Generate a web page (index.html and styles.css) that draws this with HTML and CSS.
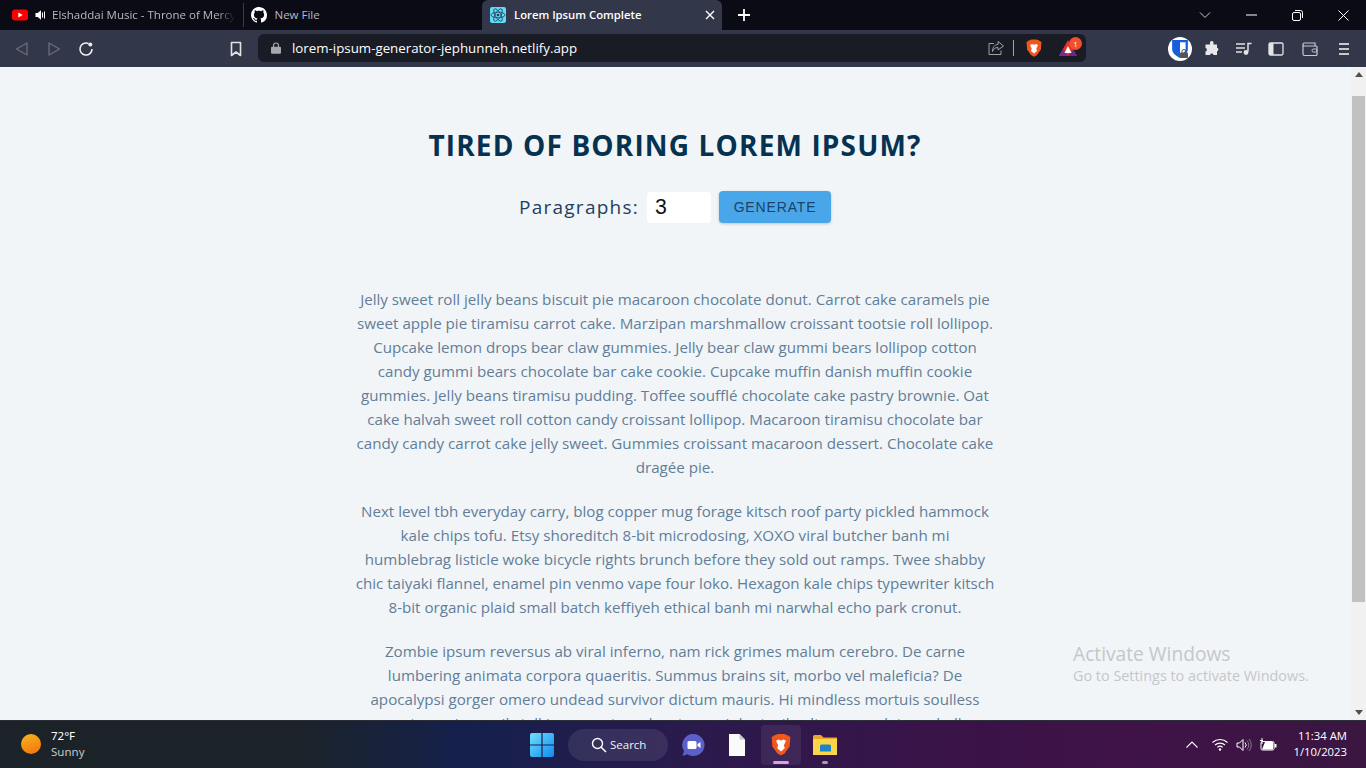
FILE: index.html

```html
<!DOCTYPE html>
<html lang="en">
<head>
    <meta charset="UTF-8">
    <meta name="viewport" content="width=device-width, initial-scale=1.0">
    <title>Lorem Ipsum Complete</title>
    <link rel="stylesheet" href="styles.css">
</head>
<body>
    <div class="screen">
        <div class="tabstrip">
            <div class="tab tab-yt">
                <svg class="fav-yt" viewBox="0 0 16 12"><rect width="16" height="11" y="0.5" rx="3" fill="#f00"/><path d="M6.3 3.5v5l4.4-2.5z" fill="#fff"/></svg>
                <svg class="audio" viewBox="0 0 12 12"><path d="M0.5 4h2.2L6 1.2v9.6L2.7 8H0.5z" fill="#fff"/><path d="M7.5 3.5v5M9.5 2.5v7" stroke="#fff" stroke-width="1"/></svg>
                <span class="tab-title fade">Elshaddai Music - Throne of Mercy</span>
            </div>
            <div class="tab tab-gh">
                <svg class="fav" viewBox="0 0 16 16"><path fill="#fff" d="M8 0C3.58 0 0 3.58 0 8c0 3.54 2.29 6.53 5.47 7.59.4.07.55-.17.55-.38 0-.19-.01-.82-.01-1.49-2.01.37-2.53-.49-2.69-.94-.09-.23-.48-.94-.82-1.13-.28-.15-.68-.52-.01-.53.63-.01 1.08.58 1.23.82.72 1.21 1.87.87 2.33.66.07-.52.28-.87.51-1.07-1.78-.2-3.64-.89-3.64-3.95 0-.87.31-1.59.82-2.15-.08-.2-.36-1.02.08-2.12 0 0 .67-.21 2.2.82.64-.18 1.32-.27 2-.27s1.36.09 2 .27c1.53-1.04 2.2-.82 2.2-.82.44 1.1.16 1.92.08 2.12.51.56.82 1.27.82 2.15 0 3.07-1.87 3.75-3.65 3.95.29.25.54.73.54 1.48 0 1.07-.01 1.93-.01 2.2 0 .21.15.46.55.38A8.01 8.01 0 0 0 16 8c0-4.42-3.58-8-8-8z"/></svg>
                <span class="tab-title">New File</span>
            </div>
            <div class="tab tab-active">
                <svg class="fav" viewBox="0 0 16 16"><rect width="16" height="16" rx="2" fill="#61dafb"/><g fill="none" stroke="#24404f" stroke-width="0.8"><ellipse cx="8" cy="8" rx="7" ry="2.8"/><ellipse cx="8" cy="8" rx="7" ry="2.8" transform="rotate(60 8 8)"/><ellipse cx="8" cy="8" rx="7" ry="2.8" transform="rotate(120 8 8)"/></g><circle cx="8" cy="8" r="1.3" fill="#24404f"/></svg>
                <span class="tab-title active-title">Lorem Ipsum Complete</span>
                <svg class="tab-close" viewBox="0 0 10 10"><path d="M1 1l8 8M9 1l-8 8" stroke="#fff" stroke-width="1.4"/></svg>
            </div>
            <svg class="new-tab" viewBox="0 0 12 12"><path d="M6 0v12M0 6h12" stroke="#fff" stroke-width="1.8"/></svg>
            <div class="win-controls">
                <div class="win-btn"><svg width="12" height="8" viewBox="0 0 12 8"><path d="M1 1.5l5 5 5-5" fill="none" stroke="#c8c8cc"/></svg></div>
                <div class="win-btn"><svg width="11" height="2" viewBox="0 0 11 2"><path d="M0 1h11" stroke="#fff"/></svg></div>
                <div class="win-btn"><svg width="11" height="11" viewBox="0 0 11 11"><rect x="0.5" y="2.5" width="8" height="8" rx="1.5" fill="none" stroke="#fff"/><path d="M3 .5h5.5a2 2 0 0 1 2 2V8" fill="none" stroke="#fff"/></svg></div>
                <div class="win-btn"><svg width="11" height="11" viewBox="0 0 11 11"><path d="M.5.5l10 10M10.5.5l-10 10" stroke="#fff"/></svg></div>
            </div>
        </div>

        <div class="toolbar">
            <div class="nav-group">
                <svg class="tool" viewBox="0 0 16 16"><path d="M13 2v12L2.500 8z" fill="none" stroke="#6a6e78" stroke-width="1.3" stroke-linejoin="round"/></svg>
                <svg class="tool" viewBox="0 0 16 16"><path d="M3 2v12L13.500 8z" fill="none" stroke="#6a6e78" stroke-width="1.3" stroke-linejoin="round"/></svg>
                <svg class="tool" viewBox="0 0 16 16"><path d="M14 8A6 6 0 1 1 10.500 2.600" fill="none" stroke="#eee" stroke-width="1.600"/><circle cx="12.300" cy="3.600" r="2" fill="#eee"/></svg>
            </div>
            <svg class="tool bookmark" viewBox="0 0 16 16"><path d="M3.500 1.500h9v13L8 11l-4.500 3.500z" fill="none" stroke="#e4e4e4" stroke-width="1.600" stroke-linejoin="round"/></svg>
            <div class="address">
                <svg class="lock" viewBox="0 0 10 12"><path d="M2.500 5V3.500a2.500 2.500 0 0 1 5 0V5" fill="none" stroke="#a6a8ae" stroke-width="1.200"/><rect y="4.800" width="10" height="7" rx="1" fill="#a6a8ae"/></svg>
                <span class="url">lorem-ipsum-generator-jephunneh.netlify.app</span>
                <svg class="share" viewBox="0 0 16 16"><path d="M6 3.500H1v11h12v-4" fill="none" stroke="#a0a2a8"/><path d="M10 1.500L15.500 6 10 10V7.500C7 7.500 5.500 9 4.500 11.500 4.500 7.500 6.500 4.500 10 4.500z" fill="none" stroke="#a0a2a8"/></svg>
                <span class="addr-sep"></span>
                <svg class="brave" viewBox="0 0 16 18"><path d="M3 1.500L5.500 .5h5L13 1.500l2.500 1.500-.6 7.500L11 16l-3 1.700L5 16 1.100 10.500.5 3z" fill="#f1561d"/><path d="M4 6l2-1 2 .7L10 5l2 1-1.700 3.500L11 12l-3 2.500L5 12l.7-2.500z" fill="#fff"/></svg>
                <div class="bat">
                    <svg class="bat-tri" viewBox="0 0 18 16"><path d="M9 0l9 16H0z" fill="#e8302c"/><path d="M0 16l4-7 5 7z" fill="#7d2b8f"/><path d="M18 16l-3.600-6.500L9 16z" fill="#5e2a8c"/><path d="M9 6l3.500 7h-7z" fill="#fff"/></svg>
                    <span class="bat-badge">1</span>
                </div>
            </div>
            <div class="ext-group">
                <div class="bitwarden">
                    <svg width="16" height="18" viewBox="0 0 14 16"><path d="M0 0h14v8c0 4-4 6.500-7 8-3-1.500-7-4-7-8z" fill="#175ddc"/><path d="M7 2h5v6c0 2.500-3 4.300-5 5.500z" fill="#fff"/></svg>
                    <svg class="bw-lock" width="8" height="9" viewBox="0 0 8 9"><path d="M2 4V2.500a2 2 0 0 1 4 0V4" fill="none" stroke="#555"/><rect y="3.500" width="8" height="5.500" rx="1" fill="#555"/></svg>
                </div>
                <svg class="tool" viewBox="0 0 16 16"><path d="M6 1.500a1.800 1.800 0 0 1 3.500 0V3.500h3.500v3.300a1.800 1.800 0 0 1 0 3.500V14H9.500a1.800 1.800 0 0 0-3.500 0H1.500v-3.500a1.800 1.800 0 0 0 0-3.500V3.500H6z" fill="#e8e8e8"/></svg>
                <svg class="tool" viewBox="0 0 16 16"><path d="M0 3h9M0 7h9M0 11h6" stroke="#e4e4e4" stroke-width="1.300"/><path d="M12 10.500V2.500h3.500" fill="none" stroke="#e4e4e4" stroke-width="1.500"/><circle cx="10" cy="11.500" r="2.400" fill="#e4e4e4"/></svg>
                <svg class="tool" viewBox="0 0 16 16"><rect x="1" y="2" width="14" height="12" rx="1.500" fill="none" stroke="#e4e4e4" stroke-width="1.300"/><rect x="1" y="2" width="4.500" height="12" fill="#e4e4e4"/></svg>
                <svg class="tool tool-wide" viewBox="0 0 16 16"><path d="M1 3.500V13a1.500 1.500 0 0 0 1.500 1.500h11.500a1 1 0 0 0 1-1V6a1 1 0 0 0-1-1H2.500A1.500 1.500 0 0 1 1 3.500 1.500 1.500 0 0 1 2.500 2H13v3" fill="none" stroke="#c8c9cd" stroke-width="1.200"/><rect x="10" y="8" width="5" height="3" rx="1.500" fill="none" stroke="#c8c9cd"/></svg>
                <svg class="tool tool-wide" viewBox="0 0 16 16"><path d="M3 3h10M3 8h10M3 13h10" stroke="#c8c9cd" stroke-width="1.800"/></svg>
            </div>
        </div>

        <div class="viewport">
            <main class="page">
                <section class="section-center">
                    <h1 class="page-title">Tired of boring lorem ipsum?</h1>
                    <form class="lorem-form">
                        <label class="amount-label" for="amount">Paragraphs:</label>
                        <input class="amount-input" type="number" id="amount" value="3">
                        <button class="btn" type="button">Generate</button>
                    </form>
                    <article class="lorem-text">
                        <p>Jelly sweet roll jelly beans biscuit pie macaroon chocolate donut. Carrot cake caramels pie<br>sweet apple pie tiramisu carrot cake. Marzipan marshmallow croissant tootsie roll lollipop.<br>Cupcake lemon drops bear claw gummies. Jelly bear claw gummi bears lollipop cotton<br>candy gummi bears chocolate bar cake cookie. Cupcake muffin danish muffin cookie<br>gummies. Jelly beans tiramisu pudding. Toffee soufflé chocolate cake pastry brownie. Oat<br>cake halvah sweet roll cotton candy croissant lollipop. Macaroon tiramisu chocolate bar<br>candy candy carrot cake jelly sweet. Gummies croissant macaroon dessert. Chocolate cake<br>dragée pie.</p>
                        <p>Next level tbh everyday carry, blog copper mug forage kitsch roof party pickled hammock<br>kale chips tofu. Etsy shoreditch 8-bit microdosing, XOXO viral butcher banh mi<br>humblebrag listicle woke bicycle rights brunch before they sold out ramps. Twee shabby<br>chic taiyaki flannel, enamel pin venmo vape four loko. Hexagon kale chips typewriter kitsch<br>8-bit organic plaid small batch keffiyeh ethical banh mi narwhal echo park cronut.</p>
                        <p>Zombie ipsum reversus ab viral inferno, nam rick grimes malum cerebro. De carne<br>lumbering animata corpora quaeritis. Summus brains sit, morbo vel maleficia? De<br>apocalypsi gorger omero undead survivor dictum mauris. Hi mindless mortuis soulless<br>creaturas, imo evil stalking monstra adventus resi dentevil vultus comedat cerebella</p>
                    </article>
                </section>
            </main>
            <div class="scrollbar">
                <svg class="arrow" viewBox="0 0 8 5"><path d="M4 0l4 5H0z" fill="#505050"/></svg>
                <div class="scroll-track"><div class="scroll-thumb"></div></div>
                <svg class="arrow" viewBox="0 0 8 5"><path d="M0 0h8L4 5z" fill="#505050"/></svg>
            </div>
            <div class="activate">
                <div class="activate-title">Activate Windows</div>
                <div class="activate-sub">Go to Settings to activate Windows.</div>
            </div>
        </div>

        <footer class="taskbar">
            <div class="weather">
                <span class="sun"></span>
                <div>
                    <div class="temp">72°F</div>
                    <div class="sky">Sunny</div>
                </div>
            </div>
            <div class="task-center">
                <svg class="start" viewBox="0 0 24 24"><defs><linearGradient id="win" x1="0" y1="0" x2="1" y2="1"><stop offset="0" stop-color="#6fe0fb"/><stop offset="1" stop-color="#0f8bf0"/></linearGradient></defs><path d="M0 2a2 2 0 0 1 2-2h9.400v11.400H0zM12.600 0H22a2 2 0 0 1 2 2v9.400H12.600zM0 12.600h11.400V24H2a2 2 0 0 1-2-2zM12.600 12.600H24V22a2 2 0 0 1-2 2h-9.400z" fill="url(#win)"/></svg>
                <div class="search">
                    <svg width="16" height="16" viewBox="0 0 16 16"><circle cx="6.500" cy="6.500" r="5" fill="none" stroke="#fff" stroke-width="1.400"/><path d="M10.200 10.200L15 15" stroke="#fff" stroke-width="1.500"/></svg>
                    <span>Search</span>
                </div>
                <div class="task-app">
                    <svg width="24" height="24" viewBox="0 0 24 24"><path d="M12.500 1a11 11 0 1 1-6 20.200L1.500 23 3 18A11 11 0 0 1 12.500 1z" fill="#5b5fc7"/><rect x="6.500" y="8" width="9" height="8" rx="1.500" fill="#fff"/><path d="M16.500 11l3-2v6l-3-2z" fill="#fff"/></svg>
                </div>
                <div class="task-app">
                    <svg width="18" height="22" viewBox="0 0 18 22"><path d="M1 0h10.500L17 5.500V22H1z" fill="#fafafa"/><path d="M11.500 0L17 5.500h-5.500z" fill="#c9c9c9"/></svg>
                </div>
                <div class="task-app task-running">
                    <svg width="20" height="23" viewBox="0 0 16 18"><path d="M3 1.500L5.500 .5h5L13 1.500l2.500 1.500-.6 7.500L11 16l-3 1.700L5 16 1.100 10.500.5 3z" fill="#f1561d"/><path d="M4 6l2-1 2 .7L10 5l2 1-1.700 3.500L11 12l-3 2.500L5 12l.7-2.500z" fill="#fff"/></svg>
                    <span class="pill pill-active"></span>
                </div>
                <div class="task-app">
                    <svg width="24" height="20" viewBox="0 0 24 20"><path d="M0 1.500A1.500 1.500 0 0 1 1.500 0h6.500l2.500 2.500H24V19a1 1 0 0 1-1 1H0z" fill="#e9a825"/><rect y="4" width="24" height="16" fill="#fbd64a"/><path d="M7 11a1.500 1.500 0 0 1 1.500-1.500h8A1.500 1.500 0 0 1 18 11v5.500H7z" fill="#1d86c8"/></svg>
                    <span class="pill"></span>
                </div>
            </div>
            <div class="tray">
                <svg class="tray-chevron" width="12" height="7" viewBox="0 0 12 7"><path d="M.5 6.500L6 1l5.500 5.500" fill="none" stroke="#fff" stroke-width="1.100"/></svg>
                <svg width="16" height="13" viewBox="0 0 16 13"><path d="M.5 4.500a11 11 0 0 1 15 0M3 7a7.500 7.500 0 0 1 10 0M5.300 9.300a4 4 0 0 1 5.400 0" fill="none" stroke="#fff" stroke-width="1.100"/><circle cx="8" cy="11.500" r="1.200" fill="#fff"/></svg>
                <svg width="16" height="14" viewBox="0 0 16 14"><path d="M1 5h2.500L7 1.500v11L3.500 9H1z" fill="none" stroke="#fff"/><path d="M9 4.500a3.500 3.500 0 0 1 0 5" fill="none" stroke="#fff"/><path d="M11 2.500a6.500 6.500 0 0 1 0 9M13 1a9 9 0 0 1 0 12" fill="none" stroke="#8a7590"/></svg>
                <svg width="17" height="13" viewBox="0 0 17 13"><rect x="1" y="3.500" width="13" height="8.500" rx="1.500" fill="none" stroke="#fff"/><path d="M14.500 6h2v3.500h-2z" fill="#fff"/><path d="M2 11.500L5 4h8v7.500z" fill="#fff"/><path d="M2 0v6M0 2.500h3" stroke="#fff"/></svg>
                <div class="clock">
                    <div>11:34 AM</div>
                    <div>1/10/2023</div>
                </div>
            </div>
        </footer>
    </div>
</body>
</html>
```

FILE: styles.css

```css
* {
    box-sizing: border-box;
}

body {
    margin: 0;
    font-family: "Open Sans", "Noto Sans", Arial, sans-serif;
}

.screen {
    display: flex;
    flex-direction: column;
    height: 100vh;
    overflow: hidden;
}

/* tab strip */
.tabstrip {
    display: flex;
    align-items: center;
    height: 30px;
    flex: none;
    background-color: #0b0b16;
}

.tab {
    display: flex;
    align-items: center;
    height: 30px;
    flex: none;
}

.tab-yt {
    width: 243.5px;
    padding-left: 12px;
    border-right: 1px solid #3a3b46;
    height: 24px;
}

.fav-yt {
    width: 16px;
    height: 12px;
    margin-right: 7px;
}

.audio {
    width: 12px;
    height: 12px;
    margin-right: 5px;
}

.tab-title {
    margin-top: -2px;
    font-size: 11.5px;
    color: #b8bac2;
    white-space: nowrap;
}

.fade {
    width: 183px;
    overflow: hidden;
    -webkit-mask-image: linear-gradient(to right, #000 90%, transparent);
    mask-image: linear-gradient(to right, #000 90%, transparent);
}

.tab-gh {
    width: 238.5px;
    padding-left: 7px;
}

.fav {
    width: 16px;
    height: 16px;
    margin-right: 8px;
}

.tab-active {
    width: 240px;
    padding: 0 7px 0 8px;
    background-color: #32374a;
    border-radius: 6px 6px 0 0;
}

.active-title {
    flex: 1;
    font-size: 11.3px;
    color: #fff;
    font-weight: 600;
}

.tab-close {
    width: 10px;
    height: 10px;
}

.new-tab {
    width: 12px;
    height: 12px;
    margin-left: 16px;
}

.win-controls {
    display: flex;
    margin-left: auto;
}

.win-btn {
    display: flex;
    align-items: center;
    justify-content: center;
    width: 46px;
    height: 30px;
}

/* toolbar */
.toolbar {
    display: flex;
    align-items: center;
    height: 37px;
    flex: none;
    background-color: #32374a;
}

.nav-group {
    display: flex;
    gap: 16px;
    padding-left: 14px;
}

.tool {
    width: 16px;
    height: 16px;
    flex: none;
}

.tool-wide {
    margin-left: 2px;
}

.bookmark {
    margin-left: 134px;
}

.address {
    display: flex;
    align-items: center;
    align-self: flex-start;
    width: 828px;
    height: 28px;
    margin-top: 4px;
    margin-left: 14px;
    padding: 0 0 0 13px;
    background-color: #191b25;
    border-radius: 6px;
}

.lock {
    width: 10px;
    height: 12px;
    margin-right: 11px;
}

.url {
    flex: 1;
    margin-top: -1px;
    font-size: 13.3px;
    color: #fff;
}

.share {
    width: 16px;
    height: 16px;
}

.addr-sep {
    width: 1px;
    height: 16px;
    margin: 0 12px 0 9px;
    background-color: #a0a2a8;
}

.brave {
    width: 16px;
    height: 18px;
    margin-right: 17px;
}

.bat {
    position: relative;
    width: 18px;
    height: 16px;
    margin-right: 9px;
}

.bat-tri {
    display: block;
    width: 18px;
    height: 16px;
}

.bat-badge {
    position: absolute;
    top: -3px;
    right: -5px;
    width: 13px;
    height: 13px;
    border-radius: 50%;
    background-color: #f0502c;
    color: #fff;
    font-size: 8px;
    line-height: 13px;
    text-align: center;
}

.ext-group {
    display: flex;
    align-items: center;
    gap: 16px;
    margin-left: 82px;
}

.bitwarden {
    position: relative;
    display: flex;
    align-items: center;
    justify-content: center;
    width: 24px;
    height: 24px;
    margin-right: -4px;
    border-radius: 50%;
    background-color: #fff;
}

.bw-lock {
    position: absolute;
    right: 4px;
    bottom: 3px;
}

/* page */
.viewport {
    position: relative;
    display: flex;
    flex: 1;
    min-height: 0;
}

.page {
    flex: 1;
    min-width: 0;
    padding-right: 1px;
    overflow: hidden;
    background-color: #f1f5f8;
}

.section-center {
    width: 660px;
    margin: 0 auto;
    padding-top: 57px;
    text-align: center;
}

.page-title {
    margin: 0;
    font-size: 28px;
    line-height: 42px;
    font-weight: 700;
    letter-spacing: 1.15px;
    text-transform: uppercase;
    color: #063251;
}

.lorem-form {
    display: flex;
    align-items: center;
    justify-content: center;
    margin-top: 25px;
}

.amount-label {
    font-size: 19px;
    letter-spacing: 1.25px;
    color: #243e5e;
}

.amount-input {
    width: 64px;
    height: 31px;
    margin: 0 8px;
    padding: 4px 8px;
    border: none;
    border-radius: 4px;
    background-color: #fff;
    font-family: "Liberation Sans", Arial, sans-serif;
    font-size: 21.3px;
    color: #111;
}

.btn {
    width: 112px;
    height: 32px;
    padding: 0;
    border: none;
    border-radius: 4px;
    background-color: #49a6e9;
    box-shadow: 0 1px 3px rgba(0, 0, 0, 0.2);
    font-family: "Liberation Sans", Arial, sans-serif;
    font-size: 14px;
    letter-spacing: 0.85px;
    text-transform: uppercase;
    color: #1a4467;
}

.lorem-text {
    margin-top: 64px;
    font-size: 15.15px;
    line-height: 24px;
    color: #617d98;
}

.lorem-text p {
    margin: 0 0 20px;
    white-space: nowrap;
}

/* scrollbar */
.scrollbar {
    display: flex;
    flex-direction: column;
    align-items: center;
    width: 15px;
    flex: none;
    padding: 5px 0;
    background-color: #f1f1f1;
}

.arrow {
    width: 8px;
    height: 5px;
    flex: none;
}

.scroll-track {
    flex: 1;
    width: 100%;
    padding: 19px 0 108px;
}

.scroll-thumb {
    height: 100%;
    margin: 0 1px;
    background-color: #c1c1c1;
}

.activate {
    position: absolute;
    top: 574px;
    left: 1073px;
    color: #c4c7ca;
    pointer-events: none;
}

.activate-title {
    font-size: 19.2px;
    line-height: 25px;
}

.activate-sub {
    font-size: 14.4px;
    line-height: 20px;
}

/* taskbar */
.taskbar {
    position: relative;
    display: flex;
    align-items: center;
    justify-content: space-between;
    height: 48px;
    flex: none;
    border-top: 1px solid #2c2f38;
    background: linear-gradient(to right, #1b2329 0, #1b2329 22%, #14204c 34%, #2a1a4c 50%, #3b1248 72%, #3f1347 85%, #3a1640 100%);
}

.weather {
    display: flex;
    align-items: center;
    width: 300px;
    margin-top: -2px;
    padding-left: 21px;
    gap: 10px;
    font-family: "Noto Sans", sans-serif;
    font-size: 11.5px;
    line-height: 16px;
}

.sun {
    width: 20px;
    height: 20px;
    border-radius: 50%;
    background: linear-gradient(160deg, #f5b71f, #f4700d);
}

.temp {
    color: #fff;
}

.sky {
    color: #c3c6ca;
}

.task-center {
    position: absolute;
    left: 530px;
    top: 0;
    display: flex;
    align-items: center;
    height: 47px;
}

.start {
    width: 24px;
    height: 24px;
}

.search {
    display: flex;
    align-items: center;
    gap: 3px;
    width: 100px;
    height: 32px;
    margin-left: 14px;
    padding-left: 23px;
    border-radius: 16px;
    background-color: rgba(255, 255, 255, 0.09);
    font-size: 11.5px;
    color: #f2f2f2;
}

.task-app {
    position: relative;
    display: flex;
    align-items: center;
    justify-content: center;
    width: 40px;
    height: 40px;
    margin-left: 4px;
    border-radius: 4px;
}

.search + .task-app {
    margin-left: 5px;
}

.task-running {
    background-color: rgba(255, 255, 255, 0.07);
}

.pill {
    position: absolute;
    left: 17px;
    bottom: 1px;
    width: 6px;
    height: 3px;
    border-radius: 2px;
    background-color: #a0a0a8;
}

.pill-active {
    left: 12px;
    width: 16px;
    background-color: #d6a3e0;
}

.tray {
    display: flex;
    align-items: center;
    gap: 8px;
    padding-right: 19px;
}

.tray-chevron {
    margin-right: 6px;
}

.clock {
    margin-left: 8px;
    margin-top: -2px;
    font-size: 11.3px;
    line-height: 16px;
    text-align: right;
    color: #fff;
}
```
